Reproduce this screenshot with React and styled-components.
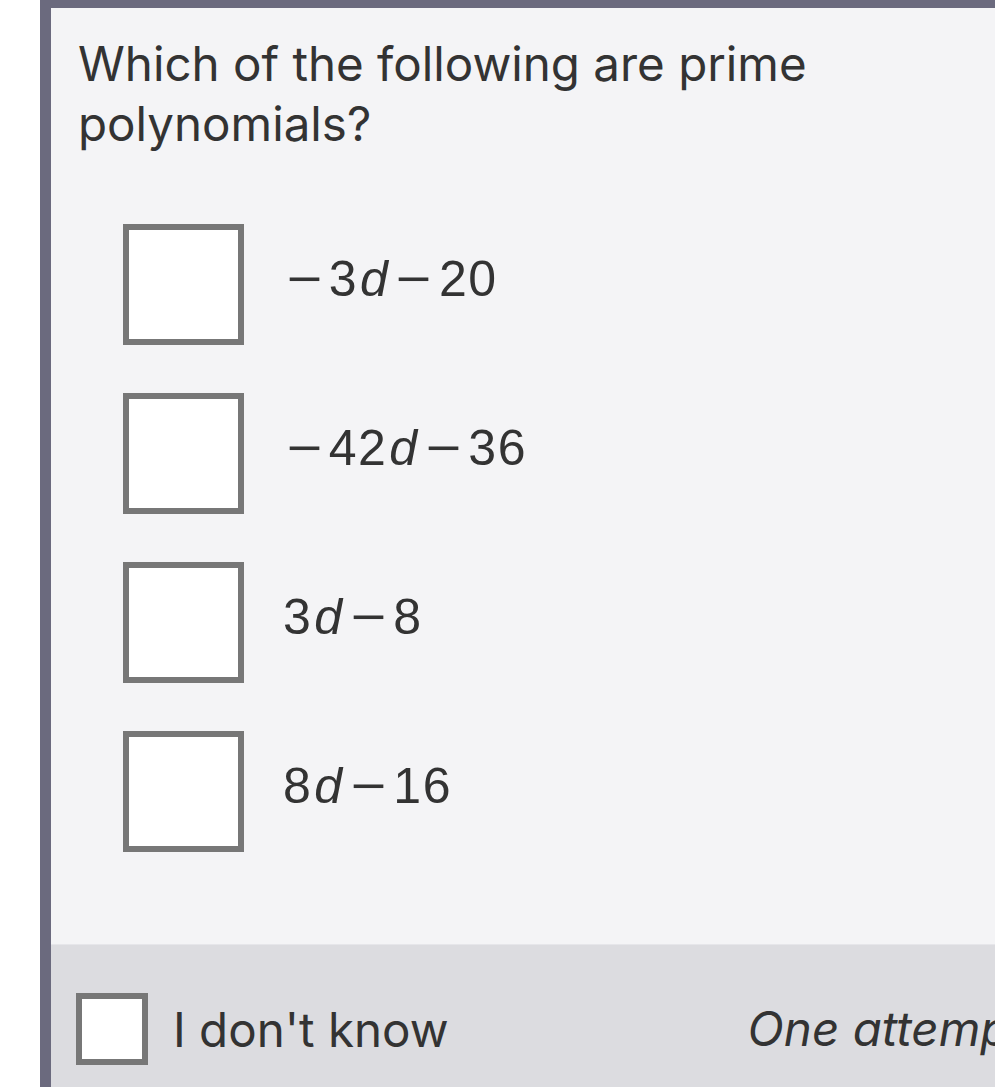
import React from "react";
import styled, { createGlobalStyle } from "styled-components";

const Global = createGlobalStyle`
  html, body { margin: 0; padding: 0; background: #ffffff; overflow: hidden; }
  body { width: 995px; height: 1087px; }
`;

const Panel = styled.div`
  margin-left: 40px;
  width: 1400px;
  height: 1087px;
  background: #f4f4f6;
  border-left: 11px solid #6b6a7e;
  border-top: 8px solid #6b6a7e;
  display: flex;
  flex-direction: column;
  box-sizing: border-box;
`;

const Body = styled.div`
  padding: 26px 0 0 27px;
  height: 936px;
  box-sizing: border-box;
`;

const Question = styled.h1`
  margin: 0;
  font-family: Inter, "Noto Sans", sans-serif;
  font-weight: 400;
  font-size: 47.5px;
  line-height: 60px;
  color: #333333;
  width: 760px;
`;

const Options = styled.div`
  display: flex;
  flex-direction: column;
  gap: 48px;
  margin-top: 70px;
  padding-left: 45px;
`;

const Option = styled.label`
  display: flex;
  align-items: center;
  gap: 39px;
`;

const Box = styled.span`
  display: block;
  box-sizing: border-box;
  width: ${(p) => p.$size}px;
  height: ${(p) => p.$size}px;
  background: #ffffff;
  border: 6px solid #777777;
  flex: none;
`;

const MathText = styled.span`
  font-family: "Liberation Sans", Arial, sans-serif;
  font-size: 50px;
  letter-spacing: 1.5px;
  color: #333333;
  display: inline-flex;
  align-items: baseline;
  margin-top: -11px;
`;

const Var = styled.i`
  font-style: italic;
  margin: 0 0 0 2px;
`;

const Op = styled.span`
  display: inline-block;
  transform: scaleX(1.22);
  margin: ${(p) => (p.$unary ? "0 8px 0 7px" : "0 9px 0 10px")};
`;

const Footer = styled.div`
  flex: 1;
  background: #dcdce0;
  border-top: 1px solid #e6e6ea;
  display: flex;
  align-items: flex-start;
  padding: 48px 0 0 25px;
  gap: 299px;
`;

const DontKnow = styled.label`
  display: flex;
  align-items: center;
  gap: 25px;
  font-family: Inter, "Noto Sans", sans-serif;
  font-size: 47.5px;
  color: #333333;
`;

const Note = styled.span`
  font-family: Inter, "Noto Sans", sans-serif;
  font-style: italic;
  font-size: 47.5px;
  color: #333333;
  margin-top: 7px;
  white-space: nowrap;
`;

const options = [
  { lead: "−", a: "3", b: "20" },
  { lead: "−", a: "42", b: "36" },
  { lead: "", a: "3", b: "8" },
  { lead: "", a: "8", b: "16" },
];

export default function App() {
  return (
    <>
      <Global />
      <Panel>
        <Body>
          <Question>Which of the following are prime polynomials?</Question>
          <Options>
            {options.map((o, i) => (
              <Option key={i}>
                <Box $size={121} />
                <MathText>
                  {o.lead && <Op $unary>{o.lead}</Op>}
                  {o.a}
                  <Var>d</Var>
                  <Op>−</Op>
                  {o.b}
                </MathText>
              </Option>
            ))}
          </Options>
        </Body>
        <Footer>
          <DontKnow>
            <Box $size={72} />
            I don't know
          </DontKnow>
          <Note>One attempt left</Note>
        </Footer>
      </Panel>
    </>
  );
}
